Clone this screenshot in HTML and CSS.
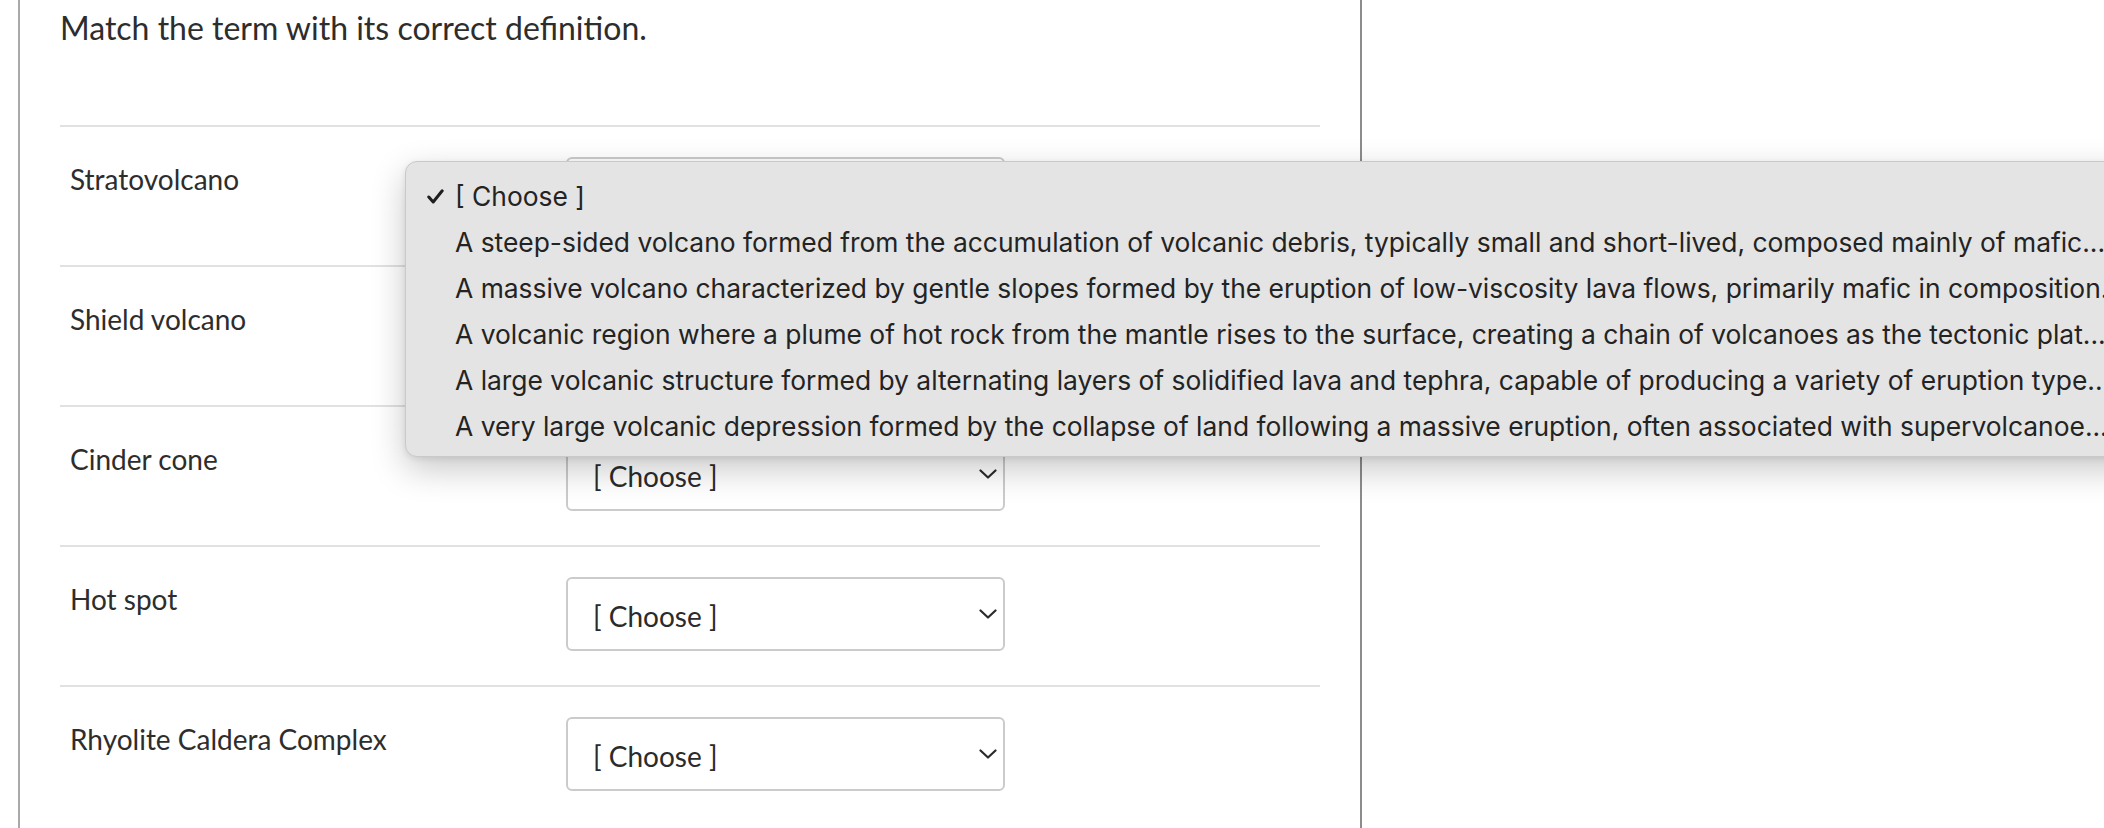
FILE: index.html
```html
<!DOCTYPE html>
<html lang="en">
<head>
<meta charset="utf-8">
<title>Matching question</title>
<link rel="stylesheet" href="styles.css">
</head>
<body>
<div class="page">
  <div class="question">
    <p class="prompt">Match the term with its correct definition.</p>
    <div class="answers">
      <div class="row">
        <div class="term">Stratovolcano</div>
        <div class="select"><span>[ Choose ]</span><svg class="chev" viewBox="0 0 18 10" width="18" height="10"><path d="M1.5 1.5 L9 8.5 L16.5 1.5" fill="none" stroke="#2b2b2b" stroke-width="2.2" stroke-linecap="round" stroke-linejoin="round"/></svg></div>
      </div>
      <div class="row">
        <div class="term">Shield volcano</div>
        <div class="select"><span>[ Choose ]</span><svg class="chev" viewBox="0 0 18 10" width="18" height="10"><path d="M1.5 1.5 L9 8.5 L16.5 1.5" fill="none" stroke="#2b2b2b" stroke-width="2.2" stroke-linecap="round" stroke-linejoin="round"/></svg></div>
      </div>
      <div class="row">
        <div class="term">Cinder cone</div>
        <div class="select"><span>[ Choose ]</span><svg class="chev" viewBox="0 0 18 10" width="18" height="10"><path d="M1.5 1.5 L9 8.5 L16.5 1.5" fill="none" stroke="#2b2b2b" stroke-width="2.2" stroke-linecap="round" stroke-linejoin="round"/></svg></div>
      </div>
      <div class="row">
        <div class="term">Hot spot</div>
        <div class="select"><span>[ Choose ]</span><svg class="chev" viewBox="0 0 18 10" width="18" height="10"><path d="M1.5 1.5 L9 8.5 L16.5 1.5" fill="none" stroke="#2b2b2b" stroke-width="2.2" stroke-linecap="round" stroke-linejoin="round"/></svg></div>
      </div>
      <div class="row">
        <div class="term">Rhyolite Caldera Complex</div>
        <div class="select"><span>[ Choose ]</span><svg class="chev" viewBox="0 0 18 10" width="18" height="10"><path d="M1.5 1.5 L9 8.5 L16.5 1.5" fill="none" stroke="#2b2b2b" stroke-width="2.2" stroke-linecap="round" stroke-linejoin="round"/></svg></div>
      </div>
    </div>
  </div>
</div>
<ul class="menu">
  <li class="item checked"><svg class="check" viewBox="0 0 17 15" width="17" height="15"><path d="M1.8 8 L6.2 13 L15.2 1.8" fill="none" stroke="#1f1f1f" stroke-width="3" stroke-linecap="round" stroke-linejoin="round"/></svg>[ Choose ]</li>
  <li class="item">A steep-sided volcano formed from the accumulation of volcanic debris, typically small and short-lived, composed mainly of mafic...</li>
  <li class="item">A massive volcano characterized by gentle slopes formed by the eruption of low-viscosity lava flows, primarily mafic in composition...</li>
  <li class="item">A volcanic region where a plume of hot rock from the mantle rises to the surface, creating a chain of volcanoes as the tectonic plat...</li>
  <li class="item">A large volcanic structure formed by alternating layers of solidified lava and tephra, capable of producing a variety of eruption type...</li>
  <li class="item">A very large volcanic depression formed by the collapse of land following a massive eruption, often associated with supervolcanoe...</li>
</ul>
</body>
</html>
```
FILE: styles.css
```css
html, body {
  margin: 0;
  padding: 0;
  background: #ffffff;
  overflow: hidden;
  width: 2104px;
  height: 828px;
}

body {
  position: relative;
  font-family: Lato, "Open Sans", sans-serif;
  color: #2d2d2d;
}

.page {
  padding-left: 18px;
}

.question {
  width: 1260px;
  height: 828px;
  border-left: 2px solid #a9a9a9;
  border-right: 2px solid #8c8c8c;
  padding: 0 40px 0 40px;
}

.prompt {
  margin: 0;
  padding-top: 9px;
  font-size: 32px;
  line-height: 38px;
  height: 38px;
  margin-bottom: 78px;
}

.row {
  display: flex;
  align-items: flex-start;
  border-top: 2px solid #e1e1e1;
  padding: 30px 0 34px 0;
  height: 74px;
}

.term {
  width: 496px;
  padding-left: 10px;
  padding-top: 1px;
  font-size: 28px;
  line-height: 42px;
}

.select {
  box-sizing: border-box;
  width: 439px;
  height: 74px;
  border: 2px solid #cbcbcb;
  border-radius: 6px;
  background: #fff;
  display: flex;
  align-items: center;
  justify-content: space-between;
  padding: 4px 6px 0 25px;
  font-size: 28px;
}

.select span {
  color: #2b2b2b;
}

.chev {
  display: block;
  margin-top: -4px;
}

.menu {
  position: absolute;
  left: 405px;
  top: 161px;
  width: 1760px;
  height: 296px;
  box-sizing: border-box;
  margin: 0;
  padding: 11px 0 0 0;
  list-style: none;
  background: #e4e4e4;
  border: 1px solid #c9c9c9;
  border-radius: 12px;
  box-shadow: 0 12px 34px rgba(0, 0, 0, 0.22), 0 2px 6px rgba(0, 0, 0, 0.08);
  font-family: Inter, "Noto Sans", sans-serif;
  font-size: 26.4px;
  color: #232323;
  overflow: hidden;
}

.item {
  height: 46px;
  line-height: 46px;
  padding-left: 49px;
  white-space: nowrap;
  position: relative;
}

.check {
  position: absolute;
  left: 21px;
  top: 16px;
}
```
